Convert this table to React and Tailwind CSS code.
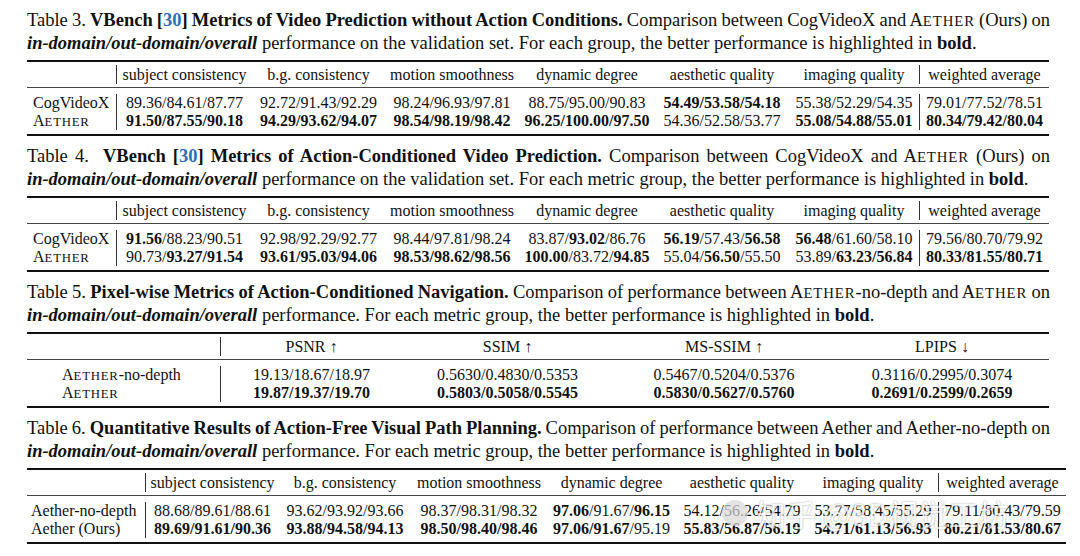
import React from "react";

// small caps, like the paper's \textsc{Aether}
const SC = ({ children }) => (
  <span>
    {children[0]}
    <span className="text-[0.8em] leading-none tracking-[0.06em] uppercase">{children.slice(1)}</span>
  </span>
);

// "*x*" marks bold parts of a cell
function Val({ v }) {
  const parts = v.split("*");
  return (
    <>
      {parts.map((p, i) => (i % 2 ? <b key={i}>{p}</b> : <span key={i}>{p}</span>))}
    </>
  );
}

function Table({ grid, width, header, rows, seps, labelClass }) {
  return (
    <div className={width}>
      <div className="h-[2px] bg-[#111]" />
      <div className={`grid ${grid} py-[3px] leading-[19px]`}>
        <div />
        {header.map((h, i) => (
          <div
            key={i}
            className={`text-center whitespace-nowrap ${seps.includes(i) ? "border-l border-[#333]" : ""}`}
          >
            {h}
          </div>
        ))}
      </div>
      <div className="h-px bg-[#444]" />
      <div className={`grid ${grid} pt-[6px] pb-[4px] leading-[18px]`}>
        {rows.map((r, ri) => (
          <React.Fragment key={ri}>
            <div className={`h-[18px] whitespace-nowrap ${labelClass}`}>{r.label}</div>
            {r.vals.map((v, i) => (
              <div
                key={i}
                className={`h-[18px] text-center whitespace-nowrap ${seps.includes(i) ? "border-l border-[#333]" : ""}`}
              >
                <Val v={v} />
              </div>
            ))}
          </React.Fragment>
        ))}
      </div>
      <div className="h-[2px] bg-[#111]" />
    </div>
  );
}

const vbenchHeader = [
  "subject consistency",
  "b.g. consistency",
  "motion smoothness",
  "dynamic degree",
  "aesthetic quality",
  "imaging quality",
  "weighted average",
];

function Caption({ line1, line2 }) {
  return (
    <div className="text-[18.5px] leading-[23px] whitespace-nowrap">
      <div className="h-[23px] [text-align-last:justify] [word-spacing:-2px] w-[1023px]">{line1}</div>
      <div className="h-[23px]">{line2}</div>
    </div>
  );
}

const Range = () => (
  <b>
    <i>in-domain/out-domain/overall</i>
  </b>
);

export default function App() {
  return (
    <div className="relative w-[1080px] h-[556px] overflow-hidden bg-white text-[#111] font-['Liberation_Serif','Times_New_Roman',serif] pl-[27px] pt-[9px]">
      {/* Table 3 */}
      <Caption
        line1={
          <>
            Table 3. <b>VBench [<span className="text-[#2f6fb7]">30</span>] Metrics of Video Prediction without Action Conditions.</b>{" "}
            Comparison between CogVideoX and <SC>Aether</SC> (Ours) on
          </>
        }
        line2={
          <>
            <Range /> performance on the validation set. For each group, the better performance is highlighted in <b>bold</b>.
          </>
        }
      />
      <div className="mt-[5px] mb-[9px] text-[16px]">
        <Table
          grid="grid-cols-[89px_136px_133px_134px_136px_134px_130px_130px]"
          width="w-[1022px]"
          header={vbenchHeader}
          seps={[0, 6]}
          labelClass="pl-[6px]"
          rows={[
            {
              label: "CogVideoX",
              vals: [
                "89.36/84.61/87.77",
                "92.72/91.43/92.29",
                "98.24/96.93/97.81",
                "88.75/95.00/90.83",
                "*54.49/53.58/54.18*",
                "55.38/52.29/54.35",
                "79.01/77.52/78.51",
              ],
            },
            {
              label: <SC>Aether</SC>,
              vals: [
                "*91.50/87.55/90.18*",
                "*94.29/93.62/94.07*",
                "*98.54/98.19/98.42*",
                "*96.25/100.00/97.50*",
                "54.36/52.58/53.77",
                "*55.08/54.88/55.01*",
                "*80.34/79.42/80.04*",
              ],
            },
          ]}
        />
      </div>

      {/* Table 4 */}
      <Caption
        line1={
          <>
            Table 4.&nbsp; <b>VBench [<span className="text-[#2f6fb7]">30</span>] Metrics of Action-Conditioned Video Prediction.</b>{" "}
            Comparison between CogVideoX and <SC>Aether</SC> (Ours) on
          </>
        }
        line2={
          <>
            <Range /> performance on the validation set. For each metric group, the better performance is highlighted in <b>bold</b>.
          </>
        }
      />
      <div className="mt-[5px] mb-[9px] text-[16px]">
        <Table
          grid="grid-cols-[89px_136px_133px_134px_136px_134px_130px_130px]"
          width="w-[1022px]"
          header={vbenchHeader}
          seps={[0, 6]}
          labelClass="pl-[6px]"
          rows={[
            {
              label: "CogVideoX",
              vals: [
                "*91.56*/88.23/90.51",
                "92.98/92.29/92.77",
                "98.44/97.81/98.24",
                "83.87/*93.02*/86.76",
                "*56.19*/57.43/*56.58*",
                "*56.48*/61.60/58.10",
                "79.56/80.70/79.92",
              ],
            },
            {
              label: <SC>Aether</SC>,
              vals: [
                "90.73/*93.27/91.54*",
                "*93.61/95.03/94.06*",
                "*98.53/98.62/98.56*",
                "*100.00*/83.72/*94.85*",
                "55.04/*56.50*/55.50",
                "53.89/*63.23/56.84*",
                "*80.33/81.55/80.71*",
              ],
            },
          ]}
        />
      </div>

      {/* Table 5 */}
      <Caption
        line1={
          <>
            Table 5. <b>Pixel-wise Metrics of Action-Conditioned Navigation.</b> Comparison of performance between{" "}
            <SC>Aether</SC>-no-depth and <SC>Aether</SC> on
          </>
        }
        line2={
          <>
            <Range /> performance. For each metric group, the better performance is highlighted in <b>bold</b>.
          </>
        }
      />
      <div className="mt-[5px] mb-[9px] text-[16px]">
        <Table
          grid="grid-cols-[193px_182px_211px_222px_214px]"
          width="w-[1022px]"
          header={["PSNR ↑", "SSIM ↑", "MS-SSIM ↑", "LPIPS ↓"]}
          seps={[0]}
          labelClass="pl-[35px]"
          rows={[
            {
              label: (
                <>
                  <SC>Aether</SC>-no-depth
                </>
              ),
              vals: ["19.13/18.67/18.97", "0.5630/0.4830/0.5353", "0.5467/0.5204/0.5376", "0.3116/0.2995/0.3074"],
            },
            {
              label: <SC>Aether</SC>,
              vals: [
                "*19.87/19.37/19.70*",
                "*0.5803/0.5058/0.5545*",
                "*0.5830/0.5627/0.5760*",
                "*0.2691/0.2599/0.2659*",
              ],
            },
          ]}
        />
      </div>

      {/* Table 6 */}
      <Caption
        line1={
          <>
            Table 6. <b>Quantitative Results of Action-Free Visual Path Planning.</b> Comparison of performance between Aether and
            Aether-no-depth on
          </>
        }
        line2={
          <>
            <Range /> performance. For each metric group, the better performance is highlighted in <b>bold</b>.
          </>
        }
      />
      <div className="mt-[5px] text-[16px]">
        <Table
          grid="grid-cols-[118px_134px_132px_136px_129px_132px_130px_128px]"
          width="w-[1039px]"
          header={vbenchHeader}
          seps={[0, 6]}
          labelClass="pl-[4px]"
          rows={[
            {
              label: "Aether-no-depth",
              vals: [
                "88.68/89.61/88.61",
                "93.62/93.92/93.66",
                "98.37/98.31/98.32",
                "*97.06*/91.67/*96.15*",
                "54.12/56.26/54.79",
                "53.77/58.45/55.29",
                "79.11/80.43/79.59",
              ],
            },
            {
              label: "Aether (Ours)",
              vals: [
                "*89.69/91.61/90.36*",
                "*93.88/94.58/94.13*",
                "*98.50/98.40/98.46*",
                "*97.06/91.67*/95.19",
                "*55.83/56.87/56.19*",
                "*54.71/61.13/56.93*",
                "*80.21/81.53/80.67*",
              ],
            },
          ]}
        />
      </div>

      {/* watermark */}
      <div className="absolute left-[722px] top-[496px] flex items-center gap-[8px] pointer-events-none opacity-70">
        <div className="w-[26px] h-[26px] rounded-full bg-[#d8d8d8]" />
        <span className="text-[30px] leading-[34px] text-white font-['Noto_Sans_CJK_SC',sans-serif] [text-shadow:0_0_2px_rgba(0,0,0,0.55)]">
          知乎 @3D视觉工坊
        </span>
      </div>
    </div>
  );
}
